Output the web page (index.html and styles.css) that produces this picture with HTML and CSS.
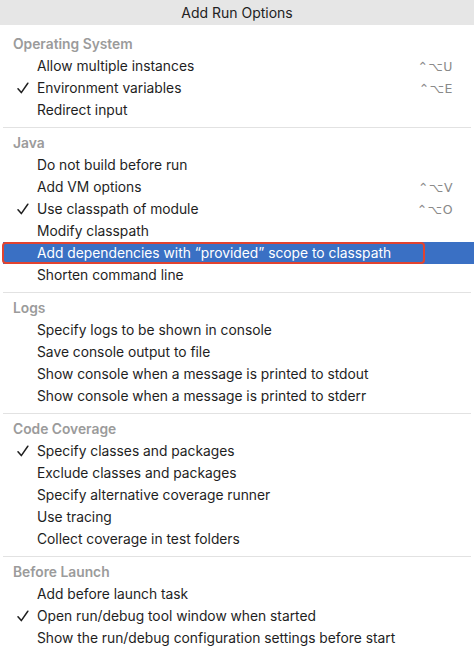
FILE: index.html
```html
<!DOCTYPE html>
<html>
<head>
<meta charset="utf-8">
<link rel="stylesheet" href="styles.css">
</head>
<body>
<div class="popup">
  <div class="title">Add Run Options</div>
  <div class="list">
    <div class="section first">
      <div class="sec-head">Operating System</div>
      <div class="item"><span class="check"></span><span class="label">Allow multiple instances</span><span class="key">⌃⌥U</span></div>
      <div class="item"><span class="check"><svg viewBox="0 0 12 12" width="12" height="12"><path d="M1 6.8 L4.3 10.6 L10.8 1.2" fill="none" stroke="#1f1f1f" stroke-width="1.5" stroke-linecap="round" stroke-linejoin="round"/></svg></span><span class="label">Environment variables</span><span class="key">⌃⌥E</span></div>
      <div class="item"><span class="check"></span><span class="label">Redirect input</span></div>
    </div>
    <div class="section">
      <div class="sec-head">Java</div>
      <div class="item"><span class="check"></span><span class="label">Do not build before run</span></div>
      <div class="item"><span class="check"></span><span class="label">Add VM options</span><span class="key">⌃⌥V</span></div>
      <div class="item"><span class="check"><svg viewBox="0 0 12 12" width="12" height="12"><path d="M1 6.8 L4.3 10.6 L10.8 1.2" fill="none" stroke="#1f1f1f" stroke-width="1.5" stroke-linecap="round" stroke-linejoin="round"/></svg></span><span class="label">Use classpath of module</span><span class="key">⌃⌥O</span></div>
      <div class="item"><span class="check"></span><span class="label">Modify classpath</span></div>
      <div class="item selected"><span class="check"></span><span class="label">Add dependencies with “provided” scope to classpath</span><span class="mark"></span></div>
      <div class="item"><span class="check"></span><span class="label">Shorten command line</span></div>
    </div>
    <div class="section">
      <div class="sec-head">Logs</div>
      <div class="item"><span class="check"></span><span class="label">Specify logs to be shown in console</span></div>
      <div class="item"><span class="check"></span><span class="label">Save console output to file</span></div>
      <div class="item"><span class="check"></span><span class="label">Show console when a message is printed to stdout</span></div>
      <div class="item"><span class="check"></span><span class="label">Show console when a message is printed to stderr</span></div>
    </div>
    <div class="section">
      <div class="sec-head">Code Coverage</div>
      <div class="item"><span class="check"><svg viewBox="0 0 12 12" width="12" height="12"><path d="M1 6.8 L4.3 10.6 L10.8 1.2" fill="none" stroke="#1f1f1f" stroke-width="1.5" stroke-linecap="round" stroke-linejoin="round"/></svg></span><span class="label">Specify classes and packages</span></div>
      <div class="item"><span class="check"></span><span class="label">Exclude classes and packages</span></div>
      <div class="item"><span class="check"></span><span class="label">Specify alternative coverage runner</span></div>
      <div class="item"><span class="check"></span><span class="label">Use tracing</span></div>
      <div class="item"><span class="check"></span><span class="label">Collect coverage in test folders</span></div>
    </div>
    <div class="section last">
      <div class="sec-head">Before Launch</div>
      <div class="item"><span class="check"></span><span class="label">Add before launch task</span></div>
      <div class="item"><span class="check"><svg viewBox="0 0 12 12" width="12" height="12"><path d="M1 6.8 L4.3 10.6 L10.8 1.2" fill="none" stroke="#1f1f1f" stroke-width="1.5" stroke-linecap="round" stroke-linejoin="round"/></svg></span><span class="label">Open run/debug tool window when started</span></div>
      <div class="item"><span class="check"></span><span class="label">Show the run/debug configuration settings before start</span></div>
    </div>
  </div>
</div>
</body>
</html>
```
FILE: styles.css
```css
* { box-sizing: border-box; }
html, body { margin: 0; padding: 0; background: #ffffff; }
body {
  width: 474px;
  height: 653px;
  overflow: hidden;
  font-family: "Inter", "Liberation Sans", sans-serif;
  font-size: 13.8px;
  color: #1e1e1e;
}
.popup { display: flex; flex-direction: column; }
.title {
  height: 25px;
  background: #e6e6e6;
  display: flex;
  align-items: center;
  justify-content: center;
  font-size: 14px;
  color: #222;
}
.list { display: flex; flex-direction: column; }
.section {
  padding: 4px 0 6px 0;
  border-bottom: 1px solid #e2e2e2;
  margin: 0 3px;
}
.section.first { padding-top: 8px; }
.section.last { border-bottom: none; }
.sec-head {
  height: 22px;
  display: flex;
  align-items: center;
  padding-left: 10px;
  font-weight: 600;
  color: #9b9b9b;
}
.item {
  height: 22px;
  display: flex;
  align-items: center;
  position: relative;
}
.check {
  width: 34px;
  display: flex;
  align-items: center;
  padding-left: 14px;
}
.label { flex: 1; white-space: nowrap; }
.key {
  font-family: "DejaVu Sans", sans-serif;
  font-size: 12.5px;
  color: #8a8a8a;
  padding-right: 18px;
  letter-spacing: 0.5px;
}
.item.selected {
  background: #3a70c4;
  color: #ffffff;
  margin-right: -3px;
}
.mark {
  position: absolute;
  left: -1px;
  top: 0;
  width: 423px;
  height: 22px;
  border: 2px solid #e2432f;
  border-radius: 4px;
}
```
